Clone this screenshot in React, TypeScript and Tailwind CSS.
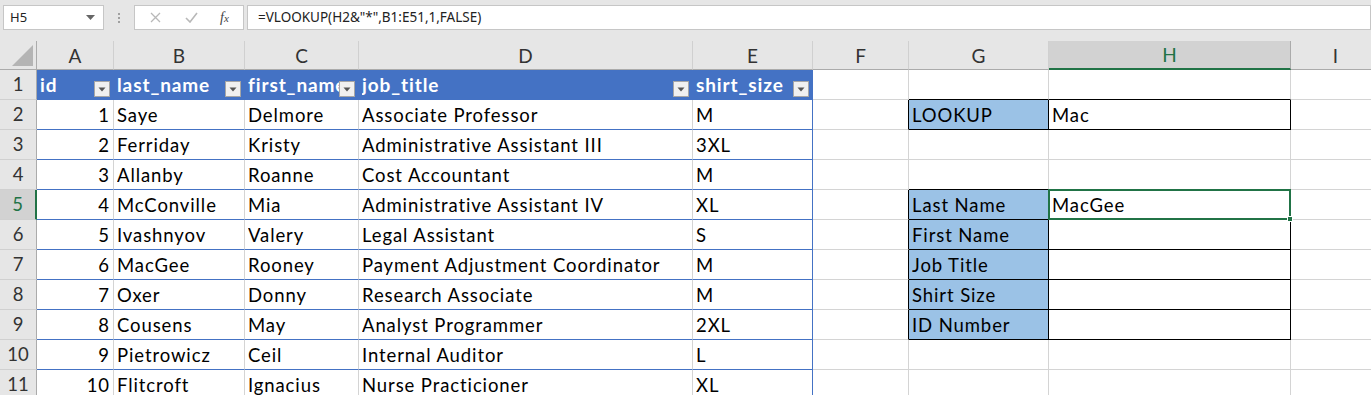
import React from "react";

type Col = { key: string; w: number };

const cols: Col[] = [
  { key: "A", w: 77 },
  { key: "B", w: 131 },
  { key: "C", w: 114 },
  { key: "D", w: 334 },
  { key: "E", w: 120 },
  { key: "F", w: 96 },
  { key: "G", w: 140 },
  { key: "H", w: 242 },
  { key: "I", w: 90 },
];

const people: [number, string, string, string, string][] = [
  [1, "Saye", "Delmore", "Associate Professor", "M"],
  [2, "Ferriday", "Kristy", "Administrative Assistant III", "3XL"],
  [3, "Allanby", "Roanne", "Cost Accountant", "M"],
  [4, "McConville", "Mia", "Administrative Assistant IV", "XL"],
  [5, "Ivashnyov", "Valery", "Legal Assistant", "S"],
  [6, "MacGee", "Rooney", "Payment Adjustment Coordinator", "M"],
  [7, "Oxer", "Donny", "Research Associate", "M"],
  [8, "Cousens", "May", "Analyst Programmer", "2XL"],
  [9, "Pietrowicz", "Ceil", "Internal Auditor", "L"],
  [10, "Flitcroft", "Ignacius", "Nurse Practicioner", "XL"],
];

const lookupLabels: Record<number, string> = {
  2: "LOOKUP",
  5: "Last Name",
  6: "First Name",
  7: "Job Title",
  8: "Shirt Size",
  9: "ID Number",
};

const lookupValues: Record<number, string> = { 2: "Mac", 5: "MacGee" };

const GRID = "#d4d4d4";
const BLUE = "#4472c4";
const BLACK = "#000000";

function FilterButton() {
  return (
    <span className="absolute bottom-[2px] right-[3px] z-10 flex h-[16px] w-[16px] items-center justify-center border border-[#a6a6a6] bg-[#f0f0f0]">
      <svg width="8" height="5" viewBox="0 0 8 5">
        <path d="M0.5 0.5 L7.5 0.5 L4 4.5 Z" fill="#555" />
      </svg>
    </span>
  );
}

export default function App() {
  const rows = Array.from({ length: 11 }, (_, i) => i + 1);

  function cellFor(row: number, colIdx: number) {
    const col = cols[colIdx];
    let right = GRID;
    let bottom = GRID;
    let bg = "#ffffff";
    let content: React.ReactNode = null;
    let align = "justify-start";
    let textCls = "text-black";
    let extra: React.ReactNode = null;

    if (colIdx <= 4) {
      bottom = BLUE;
      if (colIdx === 4) right = BLUE;
      if (row === 1) {
        bg = BLUE;
        right = BLUE;
        textCls = "text-white font-bold text-[19px]";
        content = ["id", "last_name", "first_name", "job_title", "shirt_size"][colIdx];
        extra = <FilterButton />;
      } else {
        const p = people[row - 2];
        content = p[colIdx];
        if (colIdx === 0) align = "justify-end";
      }
    }

    const isLookup = (r: number) => lookupLabels[r] !== undefined;
    if (colIdx === 5 && isLookup(row)) right = BLACK;
    if ((colIdx === 6 || colIdx === 7) && (isLookup(row) || isLookup(row + 1))) bottom = BLACK;
    if ((colIdx === 6 || colIdx === 7) && isLookup(row)) right = BLACK;
    if (colIdx === 6 && isLookup(row)) {
      bg = "#9bc2e6";
      content = lookupLabels[row];
    }
    if (colIdx === 7 && isLookup(row)) {
      content = lookupValues[row] ?? null;
    }
    if (colIdx === 7 && row === 5) {
      extra = (
        <>
          <span className="pointer-events-none absolute -left-[1px] -top-[1px] h-[31px] w-[243px] border-2 border-[#217346]" />
          <span className="absolute -bottom-[3px] -right-[3px] h-[6px] w-[6px] border border-white bg-[#217346]" />
        </>
      );
    }

    return (
      <div
        key={col.key}
        className={`relative flex h-[30px] shrink-0 items-center px-[3px] pt-[1px] ${align}`}
        style={{
          width: col.w,
          borderRight: `1px solid ${right}`,
          borderBottom: `1px solid ${bottom}`,
          background: bg,
          zIndex: colIdx === 7 && row === 5 ? 2 : undefined,
        }}
      >
        <span className={`overflow-hidden whitespace-nowrap leading-[1.35] ${textCls}`}>{content}</span>
        {extra}
      </div>
    );
  }

  return (
    <div className="h-[395px] w-[1371px] overflow-hidden bg-white font-['Lato','Noto_Sans',sans-serif] text-[18.5px] leading-none tracking-[0.9px]">
      {/* formula bar */}
      <div className="flex h-[41px] items-start bg-[#e6e6e6] pt-[5px] font-['Noto_Sans','Liberation_Sans',sans-serif] text-[13px] tracking-normal text-[#222]">
        <div className="ml-[3px] flex h-[25px] w-[101px] items-center justify-between border border-[#c6c6c6] bg-white pl-[6px] pr-[8px]">
          <span>H5</span>
          <svg width="9" height="5" viewBox="0 0 9 5">
            <path d="M0 0 L9 0 L4.5 5 Z" fill="#666" />
          </svg>
        </div>
        <div className="flex h-[25px] w-[30px] flex-col items-center justify-center gap-[2px]">
          <span className="h-[2px] w-[2px] bg-[#a0a0a0]" />
          <span className="h-[2px] w-[2px] bg-[#a0a0a0]" />
          <span className="h-[2px] w-[2px] bg-[#a0a0a0]" />
        </div>
        <div className="flex h-[25px] w-[110px] items-center border border-[#c6c6c6] bg-white">
          <svg className="ml-[15px]" width="11" height="11" viewBox="0 0 11 11">
            <path d="M1 1 L10 10 M10 1 L1 10" stroke="#b8b8b8" strokeWidth="1.3" />
          </svg>
          <svg className="ml-[24px]" width="13" height="11" viewBox="0 0 13 11">
            <path d="M1 6 L5 10 L12 1" stroke="#b8b8b8" strokeWidth="1.6" fill="none" />
          </svg>
          <span className="ml-[22px] font-['Liberation_Serif',serif] text-[14px] italic text-[#444]">
            f<span className="text-[11px]">x</span>
          </span>
        </div>
        <div className="ml-[3px] flex h-[25px] flex-1 items-center border border-[#c6c6c6] bg-white pl-[10px] text-[13.5px]">
          =VLOOKUP(H2&amp;"*",B1:E51,1,FALSE)
        </div>
      </div>

      {/* column headers */}
      <div className="flex h-[29px] text-[19px] tracking-normal">
        <div className="relative h-[29px] w-[37px] shrink-0 border-r border-b border-[#ababab] bg-[#e6e6e6]">
          <svg className="absolute bottom-[3px] right-[3px]" width="21" height="21" viewBox="0 0 21 21">
            <path d="M21 0 L21 21 L0 21 Z" fill="#b4b4b4" />
          </svg>
        </div>
        {cols.map((c) =>
          c.key === "H" ? (
            <div
              key={c.key}
              className="flex h-[29px] shrink-0 items-center justify-center border-r border-b-2 border-r-[#ababab] border-b-[#217346] bg-[#d2d2d2] text-[#217346]"
              style={{ width: c.w }}
            >
              {c.key}
            </div>
          ) : (
            <div
              key={c.key}
              className="flex h-[29px] shrink-0 items-center justify-center border-r border-b border-r-[#d0d0d0] border-b-[#ababab] bg-[#e6e6e6] text-[#333]"
              style={{ width: c.w }}
            >
              {c.key}
            </div>
          )
        )}
      </div>

      {/* rows */}
      {rows.map((r) => (
        <div key={r} className="flex">
          <div
            className={`flex h-[30px] w-[37px] shrink-0 items-center justify-center border-b border-b-[#d0d0d0] tracking-normal ${
              r === 5
                ? "border-r-2 border-r-[#217346] bg-[#d2d2d2] text-[#217346]"
                : "border-r border-r-[#ababab] bg-[#e6e6e6] text-[#333]"
            }`}
          >
            {r}
          </div>
          {cols.map((_, i) => cellFor(r, i))}
        </div>
      ))}
    </div>
  );
}
